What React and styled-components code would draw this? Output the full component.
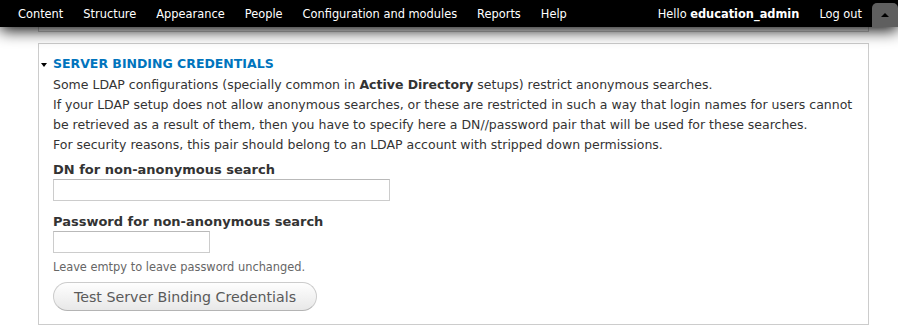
import React from 'react';
import styled, { createGlobalStyle } from 'styled-components';

const GlobalStyle = createGlobalStyle`
  html, body {
    margin: 0;
    padding: 0;
    background: #fff;
  }
  body {
    font-family: "DejaVu Sans", Verdana, sans-serif;
    color: #333;
    overflow: hidden;
  }
`;

const Toolbar = styled.div`
  position: relative;
  z-index: 2;
  display: flex;
  align-items: center;
  height: 27px;
  padding-left: 8px;
  background: #000;
  box-shadow: 0 3px 16px #000;
  color: #fff;
  font-size: 11.4px;
`;

const Menu = styled.ul`
  display: flex;
  flex: 1;
  margin: 0;
  padding: 0;
  list-style: none;
`;

const MenuItem = styled.li`
  padding: 0 10px;
  white-space: nowrap;
`;

const UserLinks = styled.div`
  display: flex;
  align-items: center;
  height: 100%;
`;

const UserLink = styled.span`
  padding: 0 10px;
  white-space: nowrap;
  strong {
    font-weight: bold;
  }
`;

const Toggle = styled.div`
  align-self: flex-end;
  display: flex;
  align-items: center;
  justify-content: center;
  width: 26px;
  height: 24px;
  background: #5f5f5f;
  border-radius: 5px 5px 0 0;

  &::after {
    content: '';
    border-left: 4px solid transparent;
    border-right: 4px solid transparent;
    border-bottom: 4px solid #000;
  }
`;

const Page = styled.div`
  padding: 0 29px 0 38px;
`;

const PrevFieldset = styled.div`
  height: 4px;
  border: 1px solid #ccc;
  border-top: none;
  margin-bottom: 11px;
`;

const Fieldset = styled.div`
  border: 1px solid #ccc;
  padding: 10px 14px 13px 14px;
`;

const Legend = styled.div`
  display: flex;
  align-items: center;
  gap: 6px;
  margin-left: -12px;
  line-height: 20px;
  color: #0074bd;
  font-size: 12.5px;
  font-weight: bold;
  text-transform: uppercase;

  &::before {
    content: '';
    border-left: 3.5px solid transparent;
    border-right: 3.5px solid transparent;
    border-top: 4px solid #000;
    margin-top: 2px;
  }
`;

const Intro = styled.p`
  margin: 1px 0 6px;
  font-size: 12.5px;
  line-height: 20px;
  white-space: nowrap;
`;

const Field = styled.div`
  margin-bottom: ${(p) => p.$gap || 0}px;
`;

const Label = styled.label`
  display: block;
  font-size: 13px;
  font-weight: bold;
  line-height: 18px;
`;

const TextInput = styled.input`
  display: block;
  box-sizing: border-box;
  width: ${(p) => p.$width}px;
  height: 22px;
  margin: 0;
  padding: 2px 4px;
  border: 1px solid #ccc;
  border-top-color: #b9b9b9;
  background: #fff;
  font: inherit;
`;

const Description = styled.div`
  margin-top: 6px;
  font-size: 11.4px;
  line-height: 16px;
  color: #666;
`;

const Button = styled.button`
  display: block;
  box-sizing: border-box;
  height: 29px;
  margin-top: 7px;
  padding: 0 20px;
  border: 1px solid #ccc;
  border-bottom-color: #b4b4b4;
  border-radius: 20px;
  background: linear-gradient(#fefefe, #e8e8e8);
  color: #5a5a5a;
  font-family: "DejaVu Sans", Verdana, sans-serif;
  font-size: 14.2px;
  cursor: pointer;
`;

export default function App() {
  return (
    <>
      <GlobalStyle />
      <Toolbar>
        <Menu>
          {['Content', 'Structure', 'Appearance', 'People', 'Configuration and modules', 'Reports', 'Help'].map((item) => (
            <MenuItem key={item}>{item}</MenuItem>
          ))}
        </Menu>
        <UserLinks>
          <UserLink>
            Hello <strong>education_admin</strong>
          </UserLink>
          <UserLink>Log out</UserLink>
          <Toggle />
        </UserLinks>
      </Toolbar>
      <Page>
        <PrevFieldset />
        <Fieldset>
          <Legend>Server Binding Credentials</Legend>
          <Intro>
            Some LDAP configurations (specially common in <strong>Active Directory</strong> setups) restrict anonymous searches.
            <br />
            If your LDAP setup does not allow anonymous searches, or these are restricted in such a way that login names for users cannot
            <br />
            be retrieved as a result of them, then you have to specify here a DN//password pair that will be used for these searches.
            <br />
            For security reasons, this pair should belong to an LDAP account with stripped down permissions.
          </Intro>
          <Field $gap={12}>
            <Label>DN for non-anonymous search</Label>
            <TextInput type="text" $width={337} />
          </Field>
          <Field>
            <Label>Password for non-anonymous search</Label>
            <TextInput type="password" $width={157} />
            <Description>Leave emtpy to leave password unchanged.</Description>
          </Field>
          <Button type="button">Test Server Binding Credentials</Button>
        </Fieldset>
      </Page>
    </>
  );
}
